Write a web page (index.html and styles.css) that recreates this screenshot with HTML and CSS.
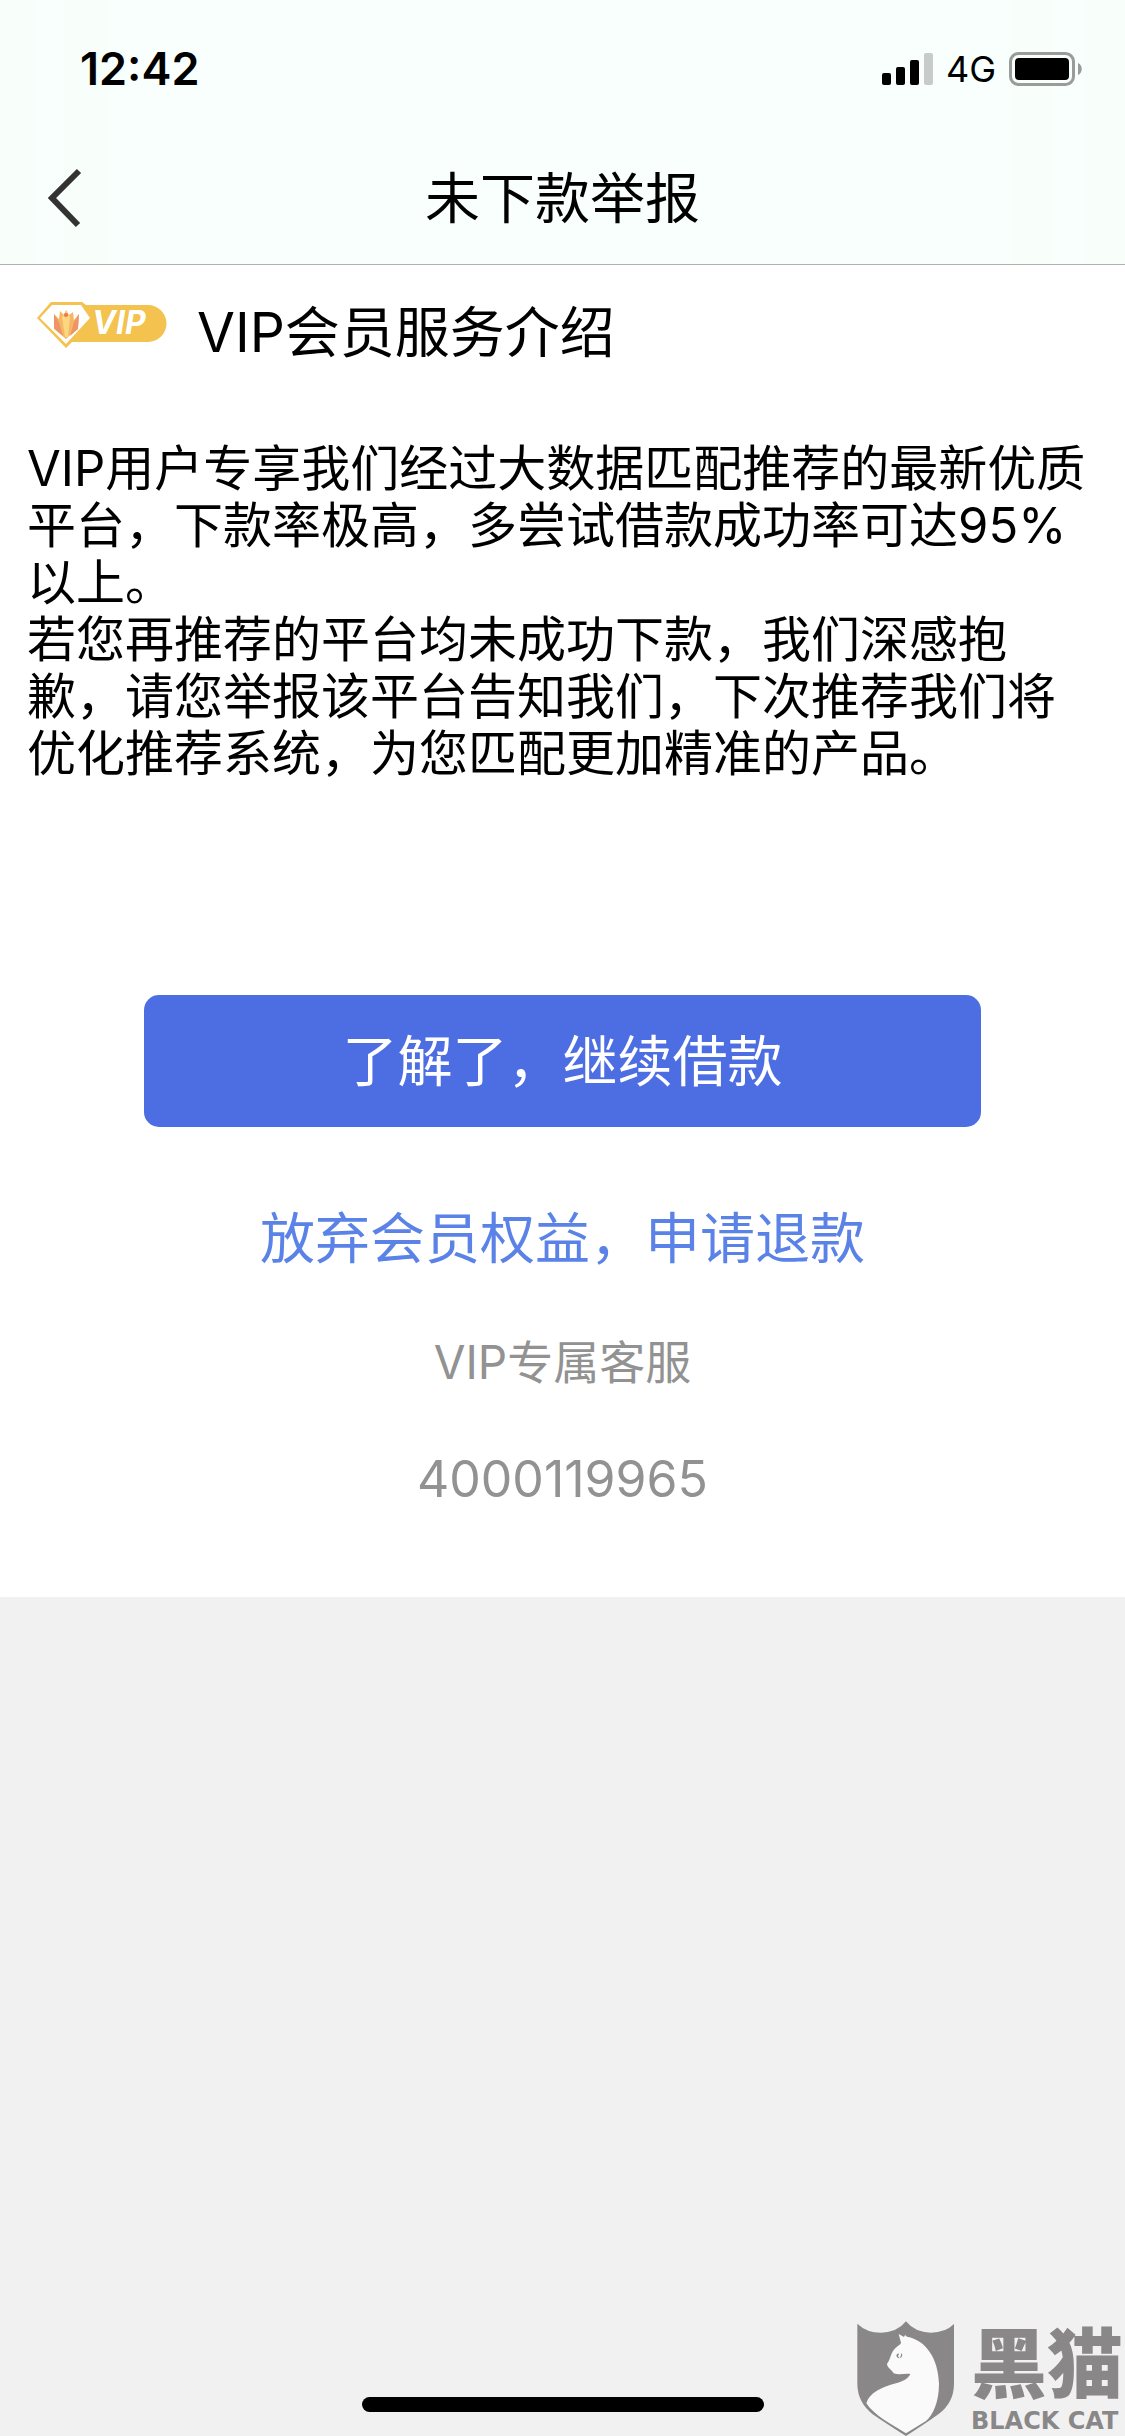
FILE: index.html
```html
<!DOCTYPE html>
<html lang="zh-CN">
<head>
<meta charset="utf-8">
<meta name="viewport" content="width=device-width, initial-scale=1">
<title>未下款举报</title>
<link rel="stylesheet" href="styles.css">
</head>
<body>
<div class="app">
  <header class="header">
    <div class="status">
      <span class="time">12:42</span>
      <div class="indicators">
        <svg class="signal" width="51" height="32" viewBox="0 0 51 32" aria-hidden="true">
          <rect x="0" y="20" width="9" height="12" rx="2"/>
          <rect x="14" y="14" width="9" height="18" rx="2"/>
          <rect x="28" y="7" width="9" height="25" rx="2"/>
          <rect x="42" y="0" width="9" height="32" rx="2" fill="#c7cbc9"/>
        </svg>
        <span class="network">4G</span>
        <svg class="battery" width="73" height="34" viewBox="0 0 73 34" aria-hidden="true">
          <rect x="1.5" y="1.5" width="63" height="31" rx="8" fill="none" stroke="#999c9a" stroke-width="3"/>
          <rect x="6" y="6" width="54" height="22" rx="4"/>
          <path d="M69 11c5 2 5 10 0 12z" fill="#999c9a"/>
        </svg>
      </div>
    </div>
    <nav class="nav">
      <button class="back" type="button" aria-label="返回">
        <svg width="34" height="60" viewBox="0 0 34 60" aria-hidden="true">
          <path d="M31 3 4 30l26 27" fill="none" stroke="#333" stroke-width="6"/>
        </svg>
      </button>
      <h1 class="title">未下款举报</h1>
    </nav>
  </header>

  <main class="main">
    <div class="intro-head">
      <svg class="badge" width="130" height="62" viewBox="0 0 130 62" aria-hidden="true">
        <path d="M0 24 14 8h31l4 3h62a18 18 0 0 1 0 37H35l-6 6z" fill="#f3c24f"/>
        <path d="M3 24 15 11h29l9 13-24 26z" fill="#fff"/>
        <path d="M17 20l5 5 1-8 4 4 2-5 3 5 4-3 1 8 5-6-1 14-12 11-12-10z" fill="#f5b765"/>
        <path d="M17 20l5 8 4 14-9-8zM42 20l-5 8-4 14 8-7z" fill="#ee9467"/>
        <path d="M25 23l4-5 4 5-2 20h-3z" fill="#fbd77f"/>
        <circle cx="29" cy="21" r="2" fill="#ea7454"/>
        <text class="badge-text" x="55" y="40">VIP</text>
      </svg>
      <h2 class="intro-title">VIP会员服务介绍</h2>
    </div>
    <div class="intro">
      <p>VIP用户专享我们经过大数据匹配推荐的最新优质平台，下款率极高，多尝试借款成功率可达95%以上。</p>
      <p>若您再推荐的平台均未成功下款，我们深感抱歉，请您举报该平台告知我们，下次推荐我们将优化推荐系统，为您匹配更加精准的产品。</p>
    </div>
    <button class="primary" type="button">了解了，继续借款</button>
    <a class="refund" href="#refund">放弃会员权益，申请退款</a>
    <p class="service">VIP专属客服</p>
    <a class="phone" href="tel:4000119965">4000119965</a>
  </main>

  <footer class="footer">
    <div class="home-bar"></div>
    <div class="watermark">
      <svg width="99" height="115" viewBox="60 62 297 345" aria-hidden="true">
        <path d="M64 70Q92 97 135 97 184 96 210 63 236 96 285 97 328 97 354 71V250Q354 306 308 341 287 357 210 407 132 357 112 343 64 306 64 250Z" fill="#8a8788"/>
        <path d="M188 101 204 110 207 104 213 109C270 119 307 175 309 250 309 306 291 343 270 362L210 399C165 371 113 344 91 309 100 277 137 260 180 249 203 243 218 233 223 221 204 219 188 225 173 219 169 208 153 203 153 190 163 179 163 162 173 149 180 139 195 132 195 127Z" fill="#fafafa"/>
        <path d="M181 164q5-5 8-4l-3 8 5 6q-9 0-10-10zM195 158q6 4 3 10-2 5-6 5 5-8 3-15z" fill="#8a8788"/>
      </svg>
      <div class="brand">
        <span class="brand-cn">黑猫</span>
        <span class="brand-en">BLACK CAT</span>
      </div>
    </div>
  </footer>
</div>
</body>
</html>
```
FILE: styles.css
```css
* {
  box-sizing: border-box;
}

body,
h1,
h2,
p {
  margin: 0;
}

body {
  font-family: Inter, "Noto Sans CJK SC", sans-serif;
  color: #000;
  background: #f1f1f1;
}

button {
  font: inherit;
  border: 0;
  padding: 0;
  cursor: pointer;
}

a {
  text-decoration: none;
}

.app {
  display: flex;
  flex-direction: column;
  min-height: 100vh;
}

.header {
  border-bottom: 1px solid #b0b0b0;
  background: linear-gradient(90deg,
    #f8fef9 0 35px, #f8fffd 35px 65px, #f8fef9 65px 108px, #f8fffd 108px calc(100% - 114px),
    #f8fef9 calc(100% - 114px) calc(100% - 72px), #f8fffd calc(100% - 72px) calc(100% - 40px), #f8fef9 calc(100% - 40px));
}

.status {
  display: flex;
  align-items: center;
  justify-content: space-between;
  height: 132px;
  padding: 6px 43px 0 80px;
}

.time {
  font-size: 45px;
  font-weight: 600;
  line-height: 52px;
}

.indicators {
  display: flex;
  align-items: center;
  gap: 13px;
}

.network {
  font-size: 36px;
  line-height: 36px;
}

.nav {
  display: grid;
  grid-template-columns: 1fr auto 1fr;
  align-items: center;
  height: 132px;
  padding: 0 48px;
}

.back {
  display: flex;
  justify-self: start;
  background: none;
}

.title,
.intro-title {
  font-size: 55px;
  font-weight: 400;
  line-height: 77px;
}

.main {
  display: flex;
  flex-direction: column;
  padding: 29px 27px 86px;
  background: #fff;
}

.intro-head {
  display: flex;
  align-items: flex-start;
  gap: 30px;
  padding-left: 10px;
}

.badge {
  flex: none;
}

.badge-text {
  font-size: 32px;
  font-style: italic;
  font-weight: 700;
  fill: #fff;
}

.intro {
  margin-top: 69px;
  font-size: 49px;
  line-height: 57px;
}

.primary {
  height: 132px;
  margin: 213px 117px 0;
  border-radius: 15px;
  background: #4d6ee3;
  color: #fff;
  font-size: 55px;
  line-height: 77px;
}

.refund {
  align-self: center;
  margin-top: 73px;
  color: #5b83e7;
  font-size: 55px;
  line-height: 77px;
}

.service,
.phone {
  align-self: center;
  margin-top: 53px;
  color: #929292;
  line-height: 64px;
}

.service {
  font-size: 46px;
}

.phone {
  font-size: 50px;
}

.footer {
  position: relative;
  display: flex;
  justify-content: center;
  margin-top: auto;
  padding: 24px 0;
}

.home-bar {
  width: 402px;
  height: 15px;
  border-radius: 8px;
  background: #000;
}

.watermark {
  position: absolute;
  right: 2px;
  bottom: 0;
  display: flex;
  align-items: flex-start;
  gap: 16px;
  color: #8a8788;
}

.brand {
  display: flex;
  flex-direction: column;
}

.brand-cn {
  font-size: 76px;
  font-weight: 900;
  line-height: 86px;
}

.brand-en {
  font-family: "DejaVu Sans", sans-serif;
  font-size: 24px;
  font-weight: 700;
  line-height: 28px;
  white-space: nowrap;
}
```
